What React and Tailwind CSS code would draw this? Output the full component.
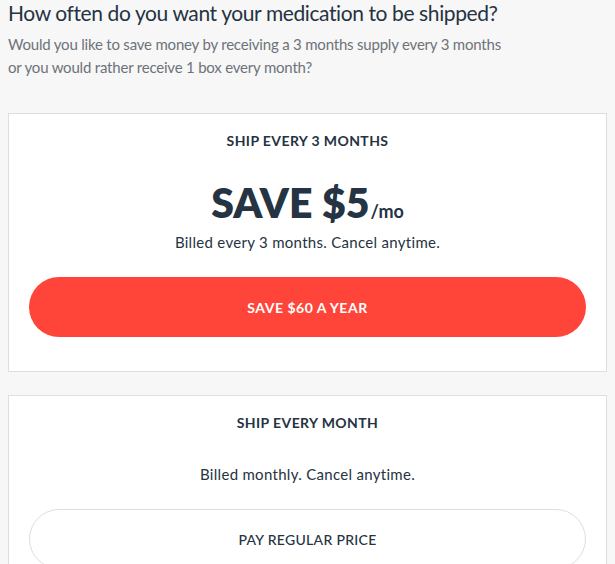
export default function App() {
  return (
    <div className="min-h-screen bg-[#f7f7f7] px-2 font-['Lato',sans-serif] text-[#253342]">
      <h1 className="pt-[1px] text-[21px] leading-[24px] tracking-[-0.4px] text-[#253342]">
        How often do you want your medication to be shipped?
      </h1>
      <p className="mt-[8px] max-w-[505px] text-[15px] leading-[23px] tracking-[-0.2px] text-[#6d737a]">
        Would you like to save money by receiving a 3 months supply every 3 months or you would rather receive 1 box every month?
      </p>

      <div className="mt-[34px] flex flex-col items-center border border-[#dadfe0] bg-white px-5 pt-[18px] pb-[34px]">
        <h2 className="text-[14px] font-bold uppercase leading-[18px] tracking-[0.4px]">Ship every 3 months</h2>
        <div className="mt-[31px] flex items-baseline">
          <span className="text-[41px] font-extrabold leading-[44px]">SAVE $5</span>
          <span className="ml-[1px] text-[18px] font-bold">/mo</span>
        </div>
        <p className="mt-[7px] text-[15px] leading-[20px] tracking-[0.3px]">Billed every 3 months. Cancel anytime.</p>
        <button className="mt-[25px] h-[60px] w-full rounded-full bg-[#ff4539] text-[14px] font-bold uppercase tracking-[0.5px] text-white">
          Save $60 a year
        </button>
      </div>

      <div className="mt-[23px] flex flex-col items-center border border-[#dadfe0] bg-white px-5 pt-[18px] pb-[34px]">
        <h2 className="text-[14px] font-bold uppercase leading-[18px] tracking-[0.4px]">Ship every month</h2>
        <p className="mt-[32px] text-[15px] leading-[20px] tracking-[0.3px]">Billed monthly. Cancel anytime.</p>
        <button className="mt-[25px] h-[60px] w-full rounded-full border border-[#dadfe0] bg-white text-[14px] font-medium uppercase tracking-[0.3px]">
          Pay regular price
        </button>
      </div>
    </div>
  );
}
